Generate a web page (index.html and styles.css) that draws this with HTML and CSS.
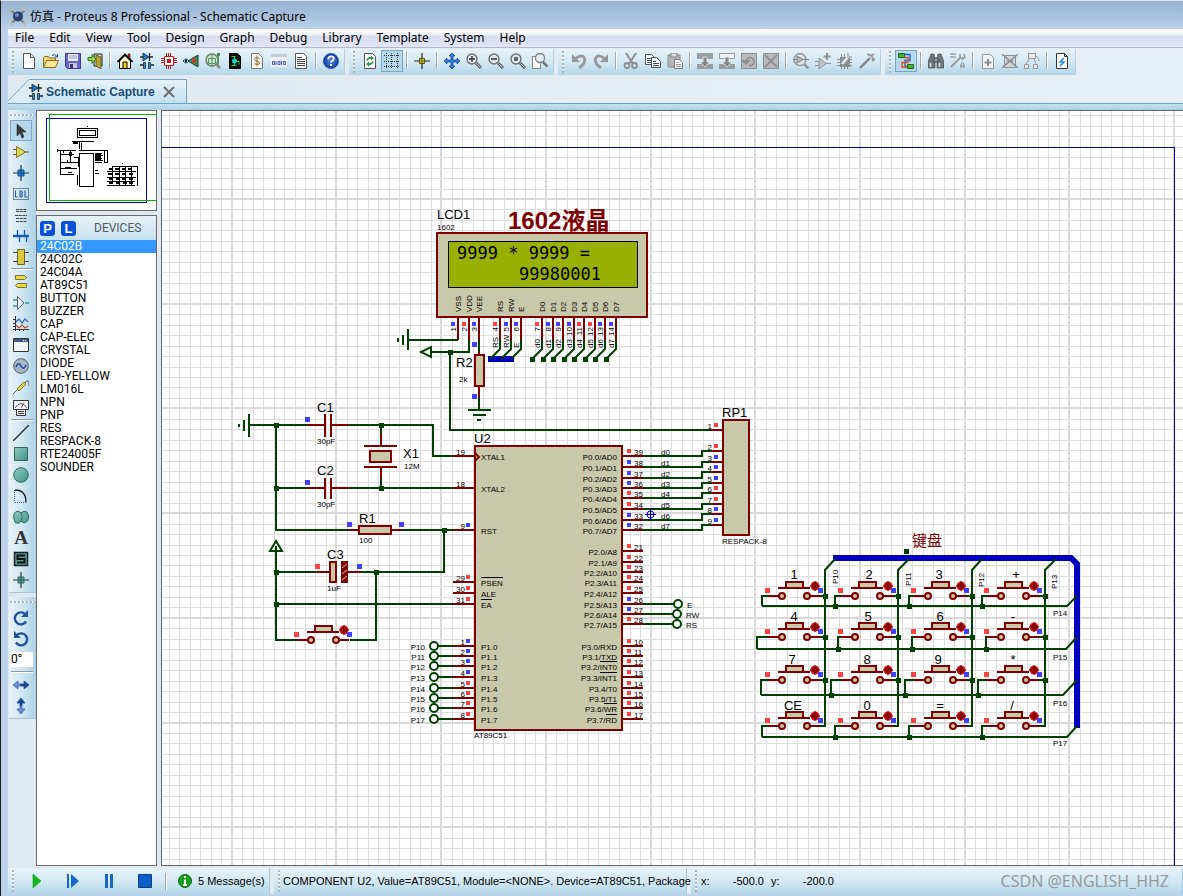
FILE: index.html
```html
<!DOCTYPE html>
<html lang="en">
<head>
<meta charset="utf-8">
<title>仿真 - Proteus 8 Professional - Schematic Capture</title>
<link rel="stylesheet" href="styles.css">
</head>
<body>
<svg class="sprite" aria-hidden="true">
  <defs>
    <linearGradient id="teal" x1="0" y1="0" x2="1" y2="1"><stop offset="0" stop-color="#8fd0c6"/><stop offset="1" stop-color="#3f8f86"/></linearGradient>
    <radialGradient id="orb"><stop offset="0" stop-color="#5a8ae8"/><stop offset="1" stop-color="#123a9c"/></radialGradient>
  </defs>
  <symbol id="i-app" viewBox="0 0 16 16"><path d="M1 1l4 4M15 1l-4 4M1 15l4-4M15 15l-4-4" stroke="#6d7d92" stroke-width="2"/><path d="M0 1h3M13 1h3M0 14h3M13 14h3" stroke="#c9b48a" stroke-width="2"/><circle cx="8" cy="7.500" r="5" fill="#2d3f63"/><circle cx="7" cy="6" r="2" fill="#6f8fc8"/></symbol>
  <symbol id="i-new" viewBox="0 0 16 16"><path d="M2.500 .5h7l4 4v11h-11z" fill="#fff" stroke="#555"/><path d="M9.500 .5v4h4" fill="#ddd" stroke="#555"/></symbol>
  <symbol id="i-open" viewBox="0 0 16 16"><path d="M.5 14.500v-10l1-1h4l1 1.500h6v3" fill="#f6d96c" stroke="#8b6c1e"/><path d="M.5 14.500l3-7h12l-3 7z" fill="#ffe999" stroke="#8b6c1e"/><path d="M9 2.500q3-2.500 5 1M14.500 1v3h-3" fill="none" stroke="#33557a"/></symbol>
  <symbol id="i-save" viewBox="0 0 16 16"><path d="M.5 .5h15v15h-13l-2-2z" fill="#6a63c4" stroke="#40398e"/><path d="M3 1h10v7H3z" fill="#e8eaf4"/><path d="M4 3h8M4 5h8" stroke="#9aa0bb"/><path d="M4 10h8v5H4z" fill="#c9c9d6"/><path d="M5 11h3v4H5z" fill="#3a347c"/></symbol>
  <symbol id="i-exit" viewBox="0 0 16 16"><path d="M7 1h8v12H7z" fill="#ddd" stroke="#222"/><path d="M9 2l5 2v12l-5-3z" fill="#b5a13a" stroke="#574a12" stroke-width=".8"/><path d="M1 4.500h4v-3l4 4.500-4 4.500v-3H1z" fill="#9cd848" stroke="#3b7418"/></symbol>
  <symbol id="i-home" viewBox="0 0 16 16"><path d="M11 1h2v5h-2z" fill="#e02020" stroke="#000" stroke-width=".6"/><path d="M2.500 8v7.500h11V8L8 2.500z" fill="#fffbd0" stroke="#000"/><path d="M.5 9L8 1.500 15.500 9" fill="none" stroke="#000" stroke-width="1.600"/><path d="M6 15V9h4v6" fill="#f0d020" stroke="#000"/></symbol>
  <symbol id="i-sch" viewBox="0 0 16 16"><path d="M1 4h3M10 4h4" stroke="#222" stroke-width="1.400"/><path d="M4 0v8l6-4z" fill="#1c78c8" stroke="#222" stroke-width=".8"/><path d="M10.500 0v8" stroke="#222" stroke-width="1.400"/><path d="M1 12h3M12 12h3" stroke="#222" stroke-width="1.400"/><path d="M4.500 9.500h2v6h-2zM9.500 9.500h2v6h-2z" fill="#2a9be0" stroke="#222" stroke-width=".8"/></symbol>
  <symbol id="i-pcb" viewBox="0 0 16 16"><path d="M5.500 0v16M7.500 0v16M9.500 0v16M0 5.500h16M0 7.500h16M0 9.500h16" stroke="#d01818"/><path d="M3.500 3.500h9v9h-9z" fill="#fff" stroke="#d01818"/><path d="M6 6h4v4H6z" fill="#d01818"/></symbol>
  <symbol id="i-3d" viewBox="0 0 16 16"><path d="M5 8l10-6v12z" fill="#2d9c48" stroke="#234"/><path d="M9 4l5 4-4 3z" fill="#e0302a"/><path d="M0 8q3-4 6 0-3 4-6 0" fill="#d8eaf8" stroke="#246"/><circle cx="3" cy="8" r="1.400" fill="#124"/></symbol>
  <symbol id="i-gerber" viewBox="0 0 16 16"><circle cx="7" cy="7" r="6" fill="#d4e0d4" stroke="#68806c" stroke-width="1.500"/><path d="M3.500 5.500h7v5h-7zM7 1v13M13.500 2v10" fill="none" stroke="#4c9a56"/><path d="M11 11l4 4" stroke="#888" stroke-width="2.500"/><path d="M12 0h3v3h-3z" fill="#3c8e49"/></symbol>
  <symbol id="i-explore" viewBox="0 0 16 16"><path d="M2.500 .5h8l3 3v12h-11z" fill="#0a0a0a" stroke="#000"/><path d="M4.500 3.500h4M4.500 12.500h5M7.500 4v8M10 8.500h2v3" stroke="#19e24a" fill="none"/><circle cx="7.500" cy="8" r="2.500" fill="#19d4c8"/></symbol>
  <symbol id="i-bom" viewBox="0 0 16 16"><path d="M2.500 .5h7l4 4v11h-11z" fill="#f6f6ee" stroke="#777"/><path d="M10.500 5.500q-5-2-5 .8c0 2.400 5 1.200 5 3.700q-.5 2.500-5 .8M8 3v10" fill="none" stroke="#8c7430"/></symbol>
  <symbol id="i-src" viewBox="0 0 16 16"><path d="M0 1h16v3H0z" fill="#c4cddb"/><path d="M0 4h16v10H0z" fill="#eef2f8"/><path d="M1.500 8.500h2v3h-2zM5 8v4M7 8.500h2v3H7zM10.500 8v4M12.500 8.500h2v3h-2z" fill="none" stroke="#5055c8"/></symbol>
  <symbol id="i-notes" viewBox="0 0 16 16"><path d="M2.500 .5h8l3 3v12h-11z" fill="#fff" stroke="#555"/><path d="M4 4.500h5M4 6.500h8M4 8.500h8M4 10.500h8M4 12.500h8" stroke="#444"/></symbol>
  <symbol id="i-help" viewBox="0 0 16 16"><circle cx="8" cy="8" r="7.600" fill="url(#orb)" stroke="#12348c" stroke-width=".6"/><path d="M5.300 6.200q0-2.900 2.800-2.900 2.700 0 2.700 2.300 0 1.500-1.600 2.300-1.100.6-1.100 1.700" fill="none" stroke="#fff" stroke-width="1.800"/><path d="M7 11h2v2H7z" fill="#fff"/></symbol>
  <symbol id="i-refresh" viewBox="0 0 16 16"><path d="M2.500 .5h8l3 3v12h-11z" fill="#fff" stroke="#555"/><path d="M5 7.500q1-3 4.500-2.500M11 8.500q-1 3-4.500 2.500" fill="none" stroke="#219a38" stroke-width="1.600"/><path d="M9 2.500L12 5.200 9 7.500zM7 8.500L4 11l3 2.500z" fill="#219a38"/></symbol>
  <symbol id="i-grid" viewBox="0 0 16 16"><path d="M2.500 0v16M7.500 0v16M13.500 0v16M0 2.500h16M0 8.500h16M0 13.500h16" stroke="#333" stroke-dasharray="1 1"/></symbol>
  <symbol id="i-origin" viewBox="0 0 16 16"><path d="M8 0v16M0 8h16" stroke="#222" stroke-width="1.200"/><path d="M5.500 5.500h5v5h-5z" fill="#d8cf38" stroke="#55520f"/><path d="M8 5v6M5 8h6" stroke="#55520f" stroke-width=".8"/></symbol>
  <symbol id="i-pan" viewBox="0 0 16 16"><path d="M8 0l3 3H9v4h4V5l3 3-3 3V9H9v4h2l-3 3-3-3h2V9H3v2L0 8l3-3v2h4V3H5z" fill="#2a7de0" stroke="#123f8c" stroke-width=".7"/></symbol>
  <symbol id="i-lens" viewBox="0 0 16 16"><circle cx="6" cy="6" r="5" fill="#dfe9f0" stroke="#6a6f76" stroke-width="1.400"/><path d="M10 10l5 5" stroke="#5a5f66" stroke-width="3"/><path d="M10.500 10.500l4 4" stroke="#c9c9c9"/></symbol>
  <symbol id="i-zin" viewBox="0 0 16 16"><use href="#i-lens"/><path d="M3 6h6M6 3v6" stroke="#333" stroke-width="1.500"/></symbol>
  <symbol id="i-zout" viewBox="0 0 16 16"><use href="#i-lens"/><path d="M3 6h6" stroke="#333" stroke-width="1.500"/></symbol>
  <symbol id="i-zall" viewBox="0 0 16 16"><use href="#i-lens"/><path d="M4 4h4v4H4z" fill="#667"/></symbol>
  <symbol id="i-zarea" viewBox="0 0 16 16"><path d="M.5 3.500h8v12h-8z" fill="#fff" stroke="#222" stroke-dasharray="1 1"/><circle cx="8" cy="5" r="4.500" fill="#e6eef4" stroke="#7a7f86" stroke-width="1.300"/><path d="M11 9l4.500 4.500" stroke="#777" stroke-width="2.500"/></symbol>
  <symbol id="i-undo" viewBox="0 0 16 16"><path d="M4 6q7-6 9.500-.5Q15 10 8 15" fill="none" stroke="#96999c" stroke-width="2.800"/><path d="M1 1v8h8z" fill="#96999c"/></symbol>
  <symbol id="i-redo" viewBox="0 0 16 16"><path d="M12 6Q5 0 2.500 5.500 1 10 8 15" fill="none" stroke="#96999c" stroke-width="2.800"/><path d="M15 1v8H7z" fill="#96999c"/></symbol>
  <symbol id="i-cut" viewBox="0 0 16 16"><path d="M3 0l7 11M13 0L6 11" stroke="#8c8f92" stroke-width="2"/><circle cx="4" cy="12.500" r="2.500" fill="none" stroke="#8c8f92" stroke-width="1.800"/><circle cx="11.500" cy="12.500" r="2.500" fill="none" stroke="#8c8f92" stroke-width="1.800"/></symbol>
  <symbol id="i-copy" viewBox="0 0 16 16"><path d="M.5 1.500h6l3 3v7h-9z" fill="#fff" stroke="#445064"/><path d="M6.500 4.500h5l4 4v6h-9z" fill="#fff" stroke="#445064"/><path d="M2 5.500h4M2 7.500h4M2 9.500h4M8 8.500h3M8 10.500h6M8 12.500h6" stroke="#445064"/></symbol>
  <symbol id="i-paste" viewBox="0 0 16 16"><path d="M1 2h12v12H1z" fill="#b4b6b8" stroke="#85888b"/><path d="M4 0h6v4H4z" fill="#d6d8da" stroke="#85888b"/><path d="M7.500 6.500h5l3 3v6h-8z" fill="#fff" stroke="#77797c"/><path d="M9 9.500h3M9 11.500h5M9 13.500h5" stroke="#999"/></symbol>
  <symbol id="i-blkcopy" viewBox="0 0 16 16"><path d="M0 0h16v6H0zM0 11h16v5H0z" fill="#9c9fa1"/><path d="M6 4h4v5h3l-5 5-5-5h3z" fill="#85888a" stroke="#e6edf2" stroke-width=".8"/></symbol>
  <symbol id="i-blkmove" viewBox="0 0 16 16"><path d="M.5 .5h15v5H.5z" fill="#eef2f5" stroke="#96999b"/><path d="M0 11h16v5H0z" fill="#9c9fa1"/><path d="M6 4h4v5h3l-5 5-5-5h3z" fill="#85888a" stroke="#e6edf2" stroke-width=".8"/></symbol>
  <symbol id="i-blkrot" viewBox="0 0 16 16"><path d="M.5 .5h15v15H.5z" fill="#b7b9bb" stroke="#8c8f92"/><path d="M5 9a4 4 0 1 1 3 3.500M2 8h6l-3 3z" fill="none" stroke="#84878a" stroke-width="1.300"/></symbol>
  <symbol id="i-blkdel" viewBox="0 0 16 16"><path d="M.5 .5h15v15H.5z" fill="#b7b9bb" stroke="#8c8f92"/><path d="M2 2l12 12M14 2L2 14" stroke="#84878a" stroke-width="1.500"/></symbol>
  <symbol id="i-pick" viewBox="0 0 16 16"><circle cx="7" cy="6.500" r="6" fill="#dfe2e4" stroke="#96999b" stroke-width="1.500"/><path d="M4 3v7l6-3.500zM0 6.500h4M10 6.500h6" fill="#b7b9bb" stroke="#7f8285"/><path d="M11 11l4.500 4.500" stroke="#96999b" stroke-width="2.500"/></symbol>
  <symbol id="i-make" viewBox="0 0 16 16"><path d="M4 5v11l7-5.500zM0 8.500h4M0 12.500h4M11 10.500h5" fill="#c4c6c8" stroke="#8c8f92"/><path d="M12 0v7M8.500 3.500h7" stroke="#8c8f92" stroke-width="2"/></symbol>
  <symbol id="i-pack" viewBox="0 0 16 16"><path d="M3 4h10v10H3z" fill="#8c8f92"/><path d="M4.500 1v15M7.500 1v15M10.500 1v15M0 6.500h15M0 9.500h15M0 12.500h15" stroke="#8c8f92"/><path d="M5 11l7-8" stroke="#e6eaec" stroke-width="2.500"/><path d="M11 0v4h4" fill="none" stroke="#b7b9bb" stroke-width="2"/></symbol>
  <symbol id="i-hammer" viewBox="0 0 16 16"><path d="M1 15L11 5" stroke="#7f8285" stroke-width="2.400"/><path d="M8 1.500q4-.5 6.500 5M12 3l3-2M13 8l3-2" fill="none" stroke="#96999b" stroke-width="2"/></symbol>
  <symbol id="i-wire" viewBox="0 0 16 16"><path d="M6 1.500h6v6H7v6h3" fill="none" stroke="#1e62d0" stroke-width="1.400"/><path d="M5 4.500h5v5H4v4.500h6" fill="none" stroke="#e05020" stroke-width="1.400"/><path d="M.5 .5h6v4h-6zM9.500 11.500h6v4h-6z" fill="#42b82c" stroke="#1c6a12"/></symbol>
  <symbol id="i-find" viewBox="0 0 16 16"><path d="M3 1h3l1 6v8H0V9zM10 1h3l3 8v6H9V7z" fill="#70757a" stroke="#3c4146" stroke-width=".6"/><path d="M6 5h4v4H6z" fill="#9fa4a8" stroke="#3c4146"/><path d="M2.500 10v4M11.500 10v4" stroke="#dfe3e6" stroke-width="1.500"/></symbol>
  <symbol id="i-prop" viewBox="0 0 16 16"><path d="M0 1h6M0 4h6" stroke="#7f8285" stroke-width="1.200"/><path d="M1 14L11 4" stroke="#96999b" stroke-width="2"/><path d="M10 1v4h4M14 1l1 3-3 3" fill="none" stroke="#96999b" stroke-width="1.500"/><path d="M11 15v-4l1.500-1.500L14 11v4M11 13h3" fill="none" stroke="#7f8285"/></symbol>
  <symbol id="i-addsheet" viewBox="0 0 16 16"><path d="M2.500 1.500h8l3 3v11h-11z" fill="#f3f4f5" stroke="#96999b"/><path d="M8 6v7M4.500 9.500h7" stroke="#8c8f92" stroke-width="2"/></symbol>
  <symbol id="i-delsheet" viewBox="0 0 16 16"><path d="M2.500 2.500h11v12h-11z" fill="#d3d5d7" stroke="#8c8f92"/><path d="M0 1l16 14M16 1L0 15M5 8h6" stroke="#8c8f92" stroke-width="1.500"/></symbol>
  <symbol id="i-hier" viewBox="0 0 16 16"><path d="M4.500 .5h7v5h-7zM.5 11.500h4v4h-4zM9.500 11.500h4v4h-4z" fill="#e6e8e9" stroke="#96999b"/><path d="M5 6l-3 5M10 6l2 5M12 3q4 2 3 5" fill="none" stroke="#96999b"/></symbol>
  <symbol id="i-erc" viewBox="0 0 16 16"><path d="M2.500 .5h8l3 3v12h-11z" fill="#fff" stroke="#333"/><path d="M10.500 .5v3h3" fill="none" stroke="#333"/><path d="M10 5l-4 4h4l-4 4" fill="none" stroke="#1d8ae0" stroke-width="1.500"/></symbol>

  <symbol id="p-arrow" viewBox="0 0 16 16"><path d="M4 1v12l3-3 2 5 2-1-2-5h4z" fill="#3a3a3a" stroke="#222" stroke-width=".5"/></symbol>
  <symbol id="p-gate" viewBox="0 0 16 16"><path d="M0 5.500h3M0 10.500h3M12 8h4" stroke="#5c5a28"/><path d="M3.500 2.500v11L12.500 8z" fill="#e4d652" stroke="#7a7224"/></symbol>
  <symbol id="p-junc" viewBox="0 0 16 16"><path d="M8 0v16M0 8h16" stroke="#234" stroke-width="1.200"/><path d="M5 5h6v6H5z" fill="#2a7fd8" stroke="#124a86"/><path d="M8 5v6M5 8h6" stroke="#124a86" stroke-width=".8"/></symbol>
  <symbol id="p-lbl" viewBox="0 0 16 16"><path d="M.5 2.500h15v11H.5z" fill="none" stroke="#222" stroke-dasharray="1 1"/><path d="M2.500 4.500v6.500H5M7 4.500v6.500h1.500l1-1-1-2 1-1.500-1-1.500H7M12 4.500v6.500h2.500" fill="none" stroke="#2a62b0" stroke-width="1.200"/></symbol>
  <symbol id="p-script" viewBox="0 0 16 16"><path d="M3 2.500h11M3 4.500h11M2 8.500h12M3 11.500h11M3 14.500h11" stroke="#444" stroke-dasharray="3 .7"/></symbol>
  <symbol id="p-bus" viewBox="0 0 16 16"><path d="M0 8h16" stroke="#145aa8" stroke-width="2.400"/><path d="M4.500 2v6M11.500 2v6M6.500 8v6M13.500 8v6" stroke="#145aa8" stroke-width="1.300"/></symbol>
  <symbol id="p-sub" viewBox="0 0 16 16"><path d="M0 3.500h16M0 12.500h16" stroke="#444"/><path d="M4.500 .5h7v15h-7z" fill="#d9c93e" stroke="#6c6420"/></symbol>
  <symbol id="p-term" viewBox="0 0 16 16"><path d="M2.500 1.500h9l2 2-2 2h-9zM13.500 9.500h-9l-2 2 2 2h9z" fill="#e8da4c" stroke="#7a7224"/></symbol>
  <symbol id="p-pin" viewBox="0 0 16 16"><path d="M4.500 1.500v13L11 8z" fill="#e7f1f6" stroke="#667"/><path d="M0 5h4M0 11h4M12 8h4" stroke="#2c9c94" stroke-width="1.300"/></symbol>
  <symbol id="p-graph" viewBox="0 0 16 16"><path d="M2.500 0v15M0 13.500h16M0 3.500h2M0 7.500h2M0 10.500h2M6.500 13v2M10.500 13v2" fill="none" stroke="#333"/><path d="M3 6l3-3 3 4 3-4 3 3" fill="none" stroke="#2a62c0" stroke-width="1.200"/><path d="M3 9l3 3 3-3 3 3 3-2" fill="none" stroke="#d04a20" stroke-width="1.200"/></symbol>
  <symbol id="p-tape" viewBox="0 0 16 16"><path d="M.5 1.500h15v13H.5z" fill="#f2f5f7" stroke="#333"/><path d="M1 2h14v3H1z" fill="#3c5a8a"/><path d="M10 3.500h4" stroke="#fff" stroke-dasharray="1 1"/></symbol>
  <symbol id="p-gen" viewBox="0 0 16 16"><circle cx="8" cy="8" r="7.300" fill="#a9b6c4" stroke="#55606c"/><path d="M3 9q2.500-6 5-1t5-1" fill="none" stroke="#1a4ea8" stroke-width="1.600"/></symbol>
  <symbol id="p-probe" viewBox="0 0 16 16"><path d="M0 15l5-5M12 4q2-4 4-1v4" fill="none" stroke="#556"/><path d="M4 10l7-7 2 2-7 7z" fill="#e8da4c" stroke="#7a7224"/></symbol>
  <symbol id="p-inst" viewBox="0 0 16 16"><path d="M.5 .5h15v9H.5zM3.500 9.500h9v6h-9z" fill="#f4f6f7" stroke="#333"/><path d="M2 8q6-9 12 0" fill="none" stroke="#2a62c0"/><path d="M8 8l3-5" stroke="#d04a20"/><path d="M5 11.500h6M5 13.500h6" stroke="#333"/></symbol>
  <symbol id="p-line" viewBox="0 0 16 16"><path d="M0 16L16 0" stroke="#333" stroke-width="1.500"/></symbol>
  <symbol id="p-rect" viewBox="0 0 16 16"><path d="M1.500 1.500h13v13h-13z" fill="url(#teal)" stroke="#365"/></symbol>
  <symbol id="p-circ" viewBox="0 0 16 16"><circle cx="8" cy="8" r="7.300" fill="url(#teal)" stroke="#365"/></symbol>
  <symbol id="p-arc" viewBox="0 0 16 16"><path d="M1.500 2v12M2 14.500h12" stroke="#1a5ec0" stroke-dasharray="1 1"/><path d="M2 2q11 0 11 12" fill="none" stroke="#222" stroke-width="1.300"/></symbol>
  <symbol id="p-path" viewBox="0 0 16 16"><path d="M8 4q-4-4-7 1-1 4 1 8 4 3 6-1 4 4 7-1 2-4-1-8-3-2-6 1zM8 4q2 4 0 8" fill="url(#teal)" stroke="#365"/></symbol>
  <symbol id="p-sym" viewBox="0 0 16 16"><path d="M1.500 1.500h13v13h-13z" fill="#4f9b90" stroke="#222" stroke-width="1.500"/><path d="M12 4.500H4.500v3.500h7v3.500H4" fill="none" stroke="#111" stroke-width="2"/></symbol>
  <symbol id="p-mark" viewBox="0 0 16 16"><path d="M8 0v16M0 8h16" stroke="#333" stroke-width="1.200"/><path d="M5 5h6v6H5z" fill="#58aaa0" stroke="#365"/><path d="M8 5v6M5 8h6" stroke="#244" stroke-width=".8"/></symbol>
  <symbol id="p-cw" viewBox="0 0 16 16"><path d="M13 11.500A6 6 0 1 1 12 4" fill="none" stroke="#234f9c" stroke-width="2.400"/><path d="M15 0v7H8z" fill="#234f9c"/></symbol>
  <symbol id="p-ccw" viewBox="0 0 16 16"><path d="M3 11.500A6 6 0 1 0 4 4" fill="none" stroke="#234f9c" stroke-width="2.400"/><path d="M1 0v7h7z" fill="#234f9c"/></symbol>
  <symbol id="p-fliph" viewBox="0 0 16 16"><path d="M0 8l5-4v3h3v2H5v3z" fill="#6d92dc" stroke="#3d62ae" stroke-width=".8"/><path d="M16 8l-5-4v3H8v2h3v3z" fill="#1d4596" stroke="#1d4596" stroke-width=".8"/></symbol>
  <symbol id="p-flipv" viewBox="0 0 16 16"><path d="M8 0l4 5H9v3H7V5H4z" fill="#1d4596" stroke="#1d4596" stroke-width=".8"/><path d="M8 16l4-5H9V8H7v3H4z" fill="#6d92dc" stroke="#3d62ae" stroke-width=".8"/></symbol>

  <symbol id="s-play" viewBox="0 0 16 16"><path d="M5 1v14l8-7z" fill="#12b81a" stroke="#0c8412" stroke-width=".5"/></symbol>
  <symbol id="s-step" viewBox="0 0 16 16"><path d="M3 1h2v14H3zM7 1v14l8-7z" fill="#1466c8"/></symbol>
  <symbol id="s-pause" viewBox="0 0 16 16"><path d="M5 1h3v14H5zM10 1h3v14h-3z" fill="#1466c8"/></symbol>
  <symbol id="s-stop" viewBox="0 0 16 16"><path d="M2.500 1.500h13v13h-13z" fill="#0d5ec4" stroke="#0b4590"/></symbol>
  <symbol id="s-info" viewBox="0 0 16 16"><circle cx="8" cy="8" r="6.500" fill="#16a01c" stroke="#0c6e10"/><path d="M8 3v2M8 6.500V12M6 12h4" stroke="#fff" stroke-width="2"/></symbol>
</svg>

<div class="window">
  <header class="titlebar">
    <svg class="icon"><use href="#i-app"/></svg>
    <h1 class="title">仿真 - Proteus 8 Professional - Schematic Capture</h1>
  </header>

  <div class="frame">
    <nav class="menubar" aria-label="Main menu">
      <button class="menu">File</button><button class="menu">Edit</button><button class="menu">View</button><button class="menu">Tool</button><button class="menu">Design</button><button class="menu">Graph</button><button class="menu">Debug</button><button class="menu">Library</button><button class="menu">Template</button><button class="menu">System</button><button class="menu">Help</button>
    </nav>

    <div class="toolbars">
      <div class="toolbar">
        <button class="tool" aria-label="New"><svg class="icon"><use href="#i-new"/></svg></button>
        <button class="tool" aria-label="Open"><svg class="icon"><use href="#i-open"/></svg></button>
        <button class="tool" aria-label="Save"><svg class="icon"><use href="#i-save"/></svg></button>
        <button class="tool" aria-label="Close project"><svg class="icon"><use href="#i-exit"/></svg></button>
        <span class="sep"></span>
        <button class="tool" aria-label="Home"><svg class="icon"><use href="#i-home"/></svg></button>
        <button class="tool" aria-label="Schematic"><svg class="icon"><use href="#i-sch"/></svg></button>
        <button class="tool" aria-label="PCB layout"><svg class="icon"><use href="#i-pcb"/></svg></button>
        <button class="tool" aria-label="3D viewer"><svg class="icon"><use href="#i-3d"/></svg></button>
        <button class="tool" aria-label="Gerber viewer"><svg class="icon"><use href="#i-gerber"/></svg></button>
        <button class="tool" aria-label="Design explorer"><svg class="icon"><use href="#i-explore"/></svg></button>
        <button class="tool" aria-label="Bill of materials"><svg class="icon"><use href="#i-bom"/></svg></button>
        <button class="tool" aria-label="Source code"><svg class="icon"><use href="#i-src"/></svg></button>
        <button class="tool" aria-label="Project notes"><svg class="icon"><use href="#i-notes"/></svg></button>
        <span class="sep"></span>
        <button class="tool" aria-label="Help"><svg class="icon"><use href="#i-help"/></svg></button>
      </div>
      <div class="toolbar">
        <button class="tool" aria-label="Redraw"><svg class="icon"><use href="#i-refresh"/></svg></button>
        <button class="tool pressed" aria-label="Toggle grid"><svg class="icon"><use href="#i-grid"/></svg></button>
        <span class="sep"></span>
        <button class="tool" aria-label="Origin"><svg class="icon"><use href="#i-origin"/></svg></button>
        <span class="sep"></span>
        <button class="tool" aria-label="Pan"><svg class="icon"><use href="#i-pan"/></svg></button>
        <button class="tool" aria-label="Zoom in"><svg class="icon"><use href="#i-zin"/></svg></button>
        <button class="tool" aria-label="Zoom out"><svg class="icon"><use href="#i-zout"/></svg></button>
        <button class="tool" aria-label="Zoom all"><svg class="icon"><use href="#i-zall"/></svg></button>
        <button class="tool" aria-label="Zoom area"><svg class="icon"><use href="#i-zarea"/></svg></button>
      </div>
      <div class="toolbar">
        <button class="tool" aria-label="Undo"><svg class="icon"><use href="#i-undo"/></svg></button>
        <button class="tool" aria-label="Redo"><svg class="icon"><use href="#i-redo"/></svg></button>
        <span class="sep"></span>
        <button class="tool" aria-label="Cut"><svg class="icon"><use href="#i-cut"/></svg></button>
        <button class="tool" aria-label="Copy"><svg class="icon"><use href="#i-copy"/></svg></button>
        <button class="tool" aria-label="Paste"><svg class="icon"><use href="#i-paste"/></svg></button>
        <span class="sep"></span>
        <button class="tool" aria-label="Block copy"><svg class="icon"><use href="#i-blkcopy"/></svg></button>
        <button class="tool" aria-label="Block move"><svg class="icon"><use href="#i-blkmove"/></svg></button>
        <button class="tool" aria-label="Block rotate"><svg class="icon"><use href="#i-blkrot"/></svg></button>
        <button class="tool" aria-label="Block delete"><svg class="icon"><use href="#i-blkdel"/></svg></button>
        <span class="sep"></span>
        <button class="tool" aria-label="Pick parts"><svg class="icon"><use href="#i-pick"/></svg></button>
        <button class="tool" aria-label="Make device"><svg class="icon"><use href="#i-make"/></svg></button>
        <button class="tool" aria-label="Packaging tool"><svg class="icon"><use href="#i-pack"/></svg></button>
        <button class="tool" aria-label="Decompose"><svg class="icon"><use href="#i-hammer"/></svg></button>
      </div>
      <div class="toolbar">
        <button class="tool pressed" aria-label="Wire autorouter"><svg class="icon"><use href="#i-wire"/></svg></button>
        <span class="sep"></span>
        <button class="tool" aria-label="Search"><svg class="icon"><use href="#i-find"/></svg></button>
        <button class="tool" aria-label="Property assignment"><svg class="icon"><use href="#i-prop"/></svg></button>
        <span class="sep"></span>
        <button class="tool" aria-label="New sheet"><svg class="icon"><use href="#i-addsheet"/></svg></button>
        <button class="tool" aria-label="Remove sheet"><svg class="icon"><use href="#i-delsheet"/></svg></button>
        <button class="tool" aria-label="Exit to parent"><svg class="icon"><use href="#i-hier"/></svg></button>
        <span class="sep"></span>
        <button class="tool" aria-label="Electrical rules check"><svg class="icon"><use href="#i-erc"/></svg></button>
      </div>
    </div>

    <div class="tabs">
      <svg class="tab-slope" viewBox="0 0 22 25"><path d="M0 22L21 .5H22V25H0z" fill="#dcedf7"/><path d="M0 22L21 .5h1" fill="none" stroke="#6fa3c4"/></svg>
      <div class="tab">
        <svg class="icon"><use href="#i-sch"/></svg>
        <span class="tab-name">Schematic Capture</span>
        <button class="tab-close" aria-label="Close tab"><svg class="icon-close" viewBox="0 0 12 12"><path d="M1 1l10 10M11 1L1 11" stroke="#6d6f72" stroke-width="2"/></svg></button>
      </div>
    </div>
    <div class="tab-strip"></div>

    <main class="workspace">
      <div class="palettes">
        <div class="palette">
          <button class="pick pressed" aria-label="Selection"><svg class="icon"><use href="#p-arrow"/></svg></button>
          <button class="pick" aria-label="Component"><svg class="icon"><use href="#p-gate"/></svg></button>
          <button class="pick" aria-label="Junction dot"><svg class="icon"><use href="#p-junc"/></svg></button>
          <button class="pick" aria-label="Wire label"><svg class="icon"><use href="#p-lbl"/></svg></button>
          <button class="pick" aria-label="Text script"><svg class="icon"><use href="#p-script"/></svg></button>
          <button class="pick" aria-label="Buses"><svg class="icon"><use href="#p-bus"/></svg></button>
          <button class="pick" aria-label="Subcircuit"><svg class="icon"><use href="#p-sub"/></svg></button>
          <span class="rule"></span>
          <button class="pick" aria-label="Terminals"><svg class="icon"><use href="#p-term"/></svg></button>
          <button class="pick" aria-label="Device pins"><svg class="icon"><use href="#p-pin"/></svg></button>
          <button class="pick" aria-label="Graph"><svg class="icon"><use href="#p-graph"/></svg></button>
          <button class="pick" aria-label="Active popup"><svg class="icon"><use href="#p-tape"/></svg></button>
          <button class="pick" aria-label="Generator"><svg class="icon"><use href="#p-gen"/></svg></button>
          <button class="pick" aria-label="Probe"><svg class="icon"><use href="#p-probe"/></svg></button>
          <button class="pick" aria-label="Instruments"><svg class="icon"><use href="#p-inst"/></svg></button>
          <span class="rule"></span>
          <button class="pick" aria-label="2D line"><svg class="icon"><use href="#p-line"/></svg></button>
          <button class="pick" aria-label="2D box"><svg class="icon"><use href="#p-rect"/></svg></button>
          <button class="pick" aria-label="2D circle"><svg class="icon"><use href="#p-circ"/></svg></button>
          <button class="pick" aria-label="2D arc"><svg class="icon"><use href="#p-arc"/></svg></button>
          <button class="pick" aria-label="2D path"><svg class="icon"><use href="#p-path"/></svg></button>
          <button class="pick pick-text" aria-label="2D text">A</button>
          <button class="pick" aria-label="2D symbol"><svg class="icon"><use href="#p-sym"/></svg></button>
          <button class="pick" aria-label="2D marker"><svg class="icon"><use href="#p-mark"/></svg></button>
        </div>
        <div class="palette">
          <button class="pick" aria-label="Rotate clockwise"><svg class="icon"><use href="#p-cw"/></svg></button>
          <button class="pick" aria-label="Rotate anti-clockwise"><svg class="icon"><use href="#p-ccw"/></svg></button>
          <input class="angle" type="text" value="0°" aria-label="Rotation angle">
          <span class="rule"></span>
          <button class="pick" aria-label="Mirror horizontally"><svg class="icon"><use href="#p-fliph"/></svg></button>
          <button class="pick" aria-label="Mirror vertically"><svg class="icon"><use href="#p-flipv"/></svg></button>
        </div>
      </div>

      <aside class="side">
        <div class="overview">
          <svg class="overview-map" viewBox="37 111 119 99" aria-label="Sheet overview">
            <g fill="none" shape-rendering="crispEdges">
              <path d="M46.500 118.500h100v84h-100z" stroke="#0000b4"/>
              <path d="M156 114.500H49.500v86H156" stroke="#00b400"/>
              <path d="M77 128h20v9H77zM79 130h16v5H79zM79 153h14v33H79zM104 150h3v12h-3z" stroke="#000"/>
              <path d="M87 126v1M72 141h22M75 141l3 3M79 141v8M81 143v7M79 150h26M58 150h18M60 154h14M60 162h18M60 168h17M60 174h14M60 151v23M70 150v13M74 157h4v10M63 150v3M67 160v3M65 167h6M68 172h4M77 175v10M95 153h7M95 155h8M95 158h7M95 160h8M95 162h7M95 170h3M95 173h4" stroke="#000"/>
              <path d="M95 154h6v6h-6zM69 152h3v4h-3zM73 141h5v3h-5z" fill="#000"/>
              <path d="M112 166h25v19M137 166v20M112 166v18M119 166v19M125 166v19M131 166v20M107 171h29M107 177h29M107 181h28M107 185h28" stroke="#000"/>
              <path d="M109 169h4M115 169h4M122 169h4M128 169h4M108 174h4M115 174h5M122 174h4M129 174h4M109 179h4M116 179h4M122 179h4M129 179h4M109 183h4M116 183h4M123 183h4M129 183h4" stroke="#000" stroke-width="2"/>
              <path d="M122 163h1M57 149v3M71 152v3" stroke="#000"/>
            </g>
          </svg>
        </div>
        <section class="devices">
          <div class="devices-head">
            <button class="pl">P</button><button class="pl">L</button>
            <h2 class="devices-title">DEVICES</h2>
          </div>
          <ul class="device-list" role="listbox" aria-label="Devices">
            <li class="device selected" role="option" aria-selected="true">24C02B</li><li class="device" role="option">24C02C</li><li class="device" role="option">24C04A</li><li class="device" role="option">AT89C51</li><li class="device" role="option">BUTTON</li><li class="device" role="option">BUZZER</li><li class="device" role="option">CAP</li><li class="device" role="option">CAP-ELEC</li><li class="device" role="option">CRYSTAL</li><li class="device" role="option">DIODE</li><li class="device" role="option">LED-YELLOW</li><li class="device" role="option">LM016L</li><li class="device" role="option">NPN</li><li class="device" role="option">PNP</li><li class="device" role="option">RES</li><li class="device" role="option">RESPACK-8</li><li class="device" role="option">RTE24005F</li><li class="device" role="option">SOUNDER</li>
          </ul>
        </section>
      </aside>

      <div class="sheet">
        <svg class="canvas" aria-label="Schematic sheet">
          <defs>
            <g id="key">
              <path class="pin" d="M-14 0H-3M28 0H38M-4-8H28"/>
              <path class="part" d="M4-14H21V-8H4z"/>
              <circle class="part" r="3"/><circle class="part" cx="25" r="3"/>
              <circle cx="33" cy="-10" r="4.500" fill="#e81010"/><path d="M33-15v10M28-10h10" fill="none" stroke="#600000"/><circle cx="33" cy="-10" r="2.500" fill="none" stroke="#500"/>
              <path class="hi" d="M-17-8h5v5h-5z"/><path class="lo" d="M36-8h5v5h-5z"/>
            </g>
          </defs>
          <g transform="translate(-162 -111)">
            <g id="grid"></g>
            <path d="M161 147.500H1174.500V870" class="border"/>

            <g class="crisp">
              <path class="part" d="M437 233H647V317H437z"/>
              <path d="M448.500 241.500H637.500V287.500H448.500z" fill="#98b000" stroke="#000"/>
              <path class="bus" d="M488 359H514"/>
              <path class="wire" d="M458 340H408M408 329V350M469 340V352H431M450 352V430H711M479 340V352M479 397V410M468 410H491"/>
              <path class="wire" d="M403 335V345M398 338V342M473 415H486M477 420H481"/>
              <path class="pin" d="M479 352V355M479 386V397"/>
              <path class="part" d="M475 355H484V386H475z"/>
              <path class="lo" d="M472 342h5v5h-5zM472 394h5v5h-5z"/>

              <path class="wire" d="M249 425H307M249 414V437M244 420V431M239 424V427M276 425V530H348M276 488H307M349 425H433V456H453M381 425V434M381 479V488M349 488H453M402 530H453M444 530V572H361M276 546V640H297M276 572H317M276 604H453M350 640H376V572"/>
              <path class="pin" d="M307 425H325M331 425H349M325 414V437M331 414V437M307 488H325M331 488H349M325 478V499M331 478V499M381 434V446M364 446H397M364 467H397M381 467V479M348 530H359M391 530H402M317 572H329M347 572H361"/>
              <path class="part" d="M370 451H391V462H370zM359 526H391V534H359zM330 562H336V582H330z"/>
              <path d="M342 562H347V582H342z" fill="#800000" stroke="#800000" stroke-width="2"/>
              <path class="lo" d="M305 417h5v5h-5zM305 480h5v5h-5zM347 522h5v5h-5zM399 522h5v5h-5zM357 564h5v5h-5z"/>
              <path class="hi" d="M315 564h5v5h-5z"/>
              <path class="part" d="M475 446H622V730H475zM723 420H749V535H723z"/>
              <path class="thin" d="M481 577.500H503M481 599.500H492M600 661.500H617M600 672.500H617M604 703.500H617M606 714.500H617"/>
            </g>
            <path d="M342 568l5-4M342 574l5-4M342 580l5-4" stroke="#c8c8aa"/>
            <path d="M475 453l4 4-4 4" fill="none" stroke="#800000" stroke-width="2"/>
            <path class="open" d="M431 347V357L421 352zM270 551H282L276 541z"/>
            <path class="crisp dot" d="M448 350h5v5h-5zM274 423h5v5h-5zM379 423h5v5h-5zM274 486h5v5h-5zM379 486h5v5h-5zM442 528h5v5h-5zM274 570h5v5h-5zM374 570h5v5h-5zM274 602h5v5h-5zM904 549h5v5h-5z"/>
            <use href="#key" x="311" y="640"/>

            <text x="437" y="219" class="name">LCD1</text><text x="437" y="230">1602</text>
            <text x="508" y="229" class="banner">1602液晶</text>
            <text x="457" y="259" class="lcd">9999 * 9999 =</text>
            <text x="519" y="280" class="lcd">99980001</text>
            <text x="456" y="367" class="name">R2</text><text x="459" y="382">2k</text>
            <text x="317" y="412" class="name">C1</text><text x="317" y="444">30pF</text>
            <text x="317" y="475" class="name">C2</text><text x="317" y="507">30pF</text>
            <text x="403" y="458" class="name">X1</text><text x="404" y="469">12M</text>
            <text x="359" y="523" class="name">R1</text><text x="359" y="543">100</text>
            <text x="327" y="559" class="name">C3</text><text x="327" y="591">1uF</text>
            <text x="474" y="443" class="name">U2</text><text x="474" y="738">AT89C51</text>
            <text x="722" y="417" class="name">RP1</text><text x="722" y="544">RESPACK-8</text>
            <text x="912" y="546" class="note">键盘</text>

            <g id="pins"></g>
            <path class="bus" d="M833 558H1071L1077 564V728"/>
            <g id="keypad"></g>

            <g fill="none" stroke="#0000c0"><circle cx="650.500" cy="514.500" r="3.500"/><path d="M650.500 509v11M645 514.500h11"/></g>
          </g>
        </svg>
      </div>
    </main>

    <footer class="statusbar">
      <div class="status-group run">
        <button class="sim" aria-label="Run"><svg class="icon"><use href="#s-play"/></svg></button>
        <button class="sim" aria-label="Step"><svg class="icon"><use href="#s-step"/></svg></button>
        <button class="sim" aria-label="Pause"><svg class="icon"><use href="#s-pause"/></svg></button>
        <button class="sim" aria-label="Stop"><svg class="icon"><use href="#s-stop"/></svg></button>
        <span class="sep"></span>
        <svg class="icon info"><use href="#s-info"/></svg>
        <span class="messages">5 Message(s)</span>
      </div>
      <div class="status-group hint">COMPONENT U2, Value=AT89C51, Module=&lt;NONE&gt;. Device=AT89C51, Package</div>
      <div class="status-group coords"><span class="axis">x:</span><span class="coord">-500.0</span><span class="axis">y:</span><span class="coord">-200.0</span><span class="credit">CSDN @ENGLISH_HHZ</span></div>
    </footer>
  </div>
</div>
<script src="schematic.js"></script>
</body>
</html>
```

FILE: styles.css
```css
* { box-sizing: border-box; }

body {
  margin: 0;
  font: 12px/16px "Liberation Sans", Arial, sans-serif;
  color: #000;
}

button {
  margin: 0;
  padding: 0;
  border: 0;
  background: none;
  font: inherit;
  color: inherit;
}

.sprite { position: absolute; width: 0; height: 0; }
.icon { display: block; width: 16px; height: 16px; flex: none; }

.window {
  display: flex;
  flex-direction: column;
  height: 100vh;
  border-left: 1px solid #1c1c1c;
  border-top: 1px solid #dfe8f1;
  background: #bcd2ea;
}

.titlebar {
  display: flex;
  align-items: center;
  gap: 4px;
  height: 28px;
  flex: none;
  padding: 4px 9px 0;
  background: linear-gradient(#96b2cf, #b9d1ea);
}
.title {
  margin: 0;
  font: 12px/18px "Noto Sans", "Noto Sans CJK SC", sans-serif;
}

.frame {
  flex: 1;
  min-height: 0;
  display: flex;
  flex-direction: column;
  margin: 0 0 2px 7px;
  background: linear-gradient(90deg, #e0e8f0, #e8f0f7);
}

.menubar {
  display: flex;
  gap: 15px;
  height: 19px;
  flex: none;
  padding: 0 7px;
  border-bottom: 1px solid #b5b5cd;
  background: linear-gradient(#fff, #eaeef8 35%, #d8dcf0 40%, #e3e6f7);
}
.menu { font: 12px/18px "Noto Sans", "Noto Sans CJK SC", sans-serif; }

.toolbars { display: flex; gap: 4px; height: 27px; flex: none; padding-top: 1px; }
.toolbar {
  position: relative;
  display: flex;
  align-items: center;
  padding: 0 2px 3px 10px;
  border-right: 1px solid #b3d0e3;
  background: linear-gradient(#e6f2f9, #d3e9f5 50%, #b4d5e7);
}
.toolbar::before, .status-group::before {
  content: "";
  position: absolute;
  left: 4px;
  top: 2px;
  bottom: 2px;
  width: 2px;
  background: repeating-linear-gradient(#aab4bc 0 2px, #fff 2px 3px, transparent 3px 4px);
}
.tool { display: grid; place-items: center; width: 22px; height: 22px; flex: none; }
.pressed { border: 1px solid #7ba7c4; background: #b6d8ea; }
.sep { width: 2px; height: 17px; margin: 0 3px; flex: none; border-left: 1px solid #a2a7ab; background: #fff; }

.tabs { display: flex; height: 28px; flex: none; padding-top: 4px; }
.tab-slope { width: 22px; height: 25px; flex: none; }
.tab {
  display: flex;
  align-items: center;
  width: 157px;
  height: 25px;
  border-top: 1px solid #6fa3c4;
  border-right: 1px solid #6fa3c4;
  background: linear-gradient(#e6f2f9, #c3e0ef);
}
.tab .icon { margin-left: -2px; }
.tab-name { margin: 0 8px 0 2px; font-weight: bold; white-space: nowrap; color: #1c4c74; }
.icon-close { display: block; width: 12px; height: 12px; }
.tab-strip {
  height: 7px;
  flex: none;
  border-top: 1px solid #6fa3c4;
  background: linear-gradient(#c3e0ef, #aed0e4);
}

.workspace { flex: 1; min-height: 0; display: flex; }

.palettes { width: 28px; flex: none; display: flex; flex-direction: column; gap: 4px; padding-left: 1px; }
.palette {
  position: relative;
  display: flex;
  flex-direction: column;
  align-items: flex-start;
  padding: 10px 2px 2px 1px;
  border-bottom: 1px solid #a5c4d8;
  background: linear-gradient(90deg, #e6f2f9, #cfe6f3 50%, #acd1e5);
}
.palette::before {
  content: "";
  position: absolute;
  left: 1px;
  right: 1px;
  top: 4px;
  height: 2px;
  background: repeating-linear-gradient(90deg, #aab4bc 0 2px, #fff 2px 3px, transparent 3px 4px);
}
.pick { display: grid; place-items: center; width: 22px; height: 21px; flex: none; }
.pick-text { font: bold 19px/21px "Liberation Serif", serif; color: #333; }
.rule { width: 22px; height: 2px; margin: 1px; border-top: 1px solid #8f979d; background: #fff; }
.angle {
  width: 23px;
  height: 15px;
  margin: 3px 0;
  padding: 0 1px;
  border: 0;
  background: #fff;
  font: 12px/15px Roboto, sans-serif;
}

.side { width: 121px; flex: none; display: flex; flex-direction: column; gap: 4px; margin-right: 4px; }
.overview { height: 101px; flex: none; border: 1px solid #6b6b6b; background: #fff; }
.overview-map { display: block; width: 119px; height: 99px; }
.devices { flex: 1; min-height: 0; display: flex; flex-direction: column; border: 1px solid #6b6b6b; background: #fff; }
.devices-head {
  display: flex;
  align-items: center;
  gap: 6px;
  height: 24px;
  flex: none;
  padding-left: 3px;
  background: linear-gradient(#e6f2f9, #c6e1ef);
}
.pl {
  width: 15px;
  height: 15px;
  border-radius: 3px;
  background: #0b50d8;
  color: #fff;
  font: bold 13px/15px "Liberation Sans", sans-serif;
}
.devices-title { margin: 0 0 0 12px; font: 12px/16px Roboto, sans-serif; color: #505860; }
.device-list { margin: 0; padding: 0; list-style: none; }
.device { padding: 0 3px; font: 12px/13px Roboto, sans-serif; }
.selected { background: #3399ff; color: #fff; }

.sheet {
  flex: 1;
  min-width: 0;
  display: flex;
  overflow: hidden;
  border: 1px solid #5f6468;
  border-right: 0;
  background: #fff;
}
.canvas { display: block; width: 100%; height: 100%; font: 8px "Liberation Sans", Arial, sans-serif; }

.crisp, .border, .minor, .major { shape-rendering: crispEdges; }
.minor { fill: #dedede; }
.major { fill: #d9d9d9; }
.border { fill: none; stroke: #0000b4; }
.wire { fill: none; stroke: #004000; stroke-width: 2; }
.pin { fill: none; stroke: #800000; stroke-width: 2; }
.part { fill: #c8c8aa; stroke: #800000; stroke-width: 2; }
.bus { fill: none; stroke: #0000c0; stroke-width: 6; }
.open { fill: none; stroke: #004000; stroke-width: 2; }
.node { fill: #fff; stroke: #004000; stroke-width: 2; }
.dot { fill: #004000; }
.hi { fill: #ff4040; }
.lo { fill: #4040ff; }
.thin { fill: none; stroke: #000; }
.end { text-anchor: end; }
.mid { text-anchor: middle; }
.name { font-size: 13px; }
.banner { font: bold 24px "Liberation Sans", "Noto Sans CJK SC", sans-serif; fill: #800000; }
.note { font: 15px "Noto Sans CJK SC", sans-serif; fill: #800000; }
.lcd { font: 17px "DejaVu Sans Mono", monospace; white-space: pre; }

.statusbar { display: flex; gap: 4px; height: 26px; flex: none; margin-top: 2px; }
.status-group {
  position: relative;
  display: flex;
  align-items: center;
  padding-left: 10px;
  border-right: 1px solid #a8c8dc;
  background: linear-gradient(#e6f2f9, #d3e9f5 50%, #b4d5e7);
  font-size: 11px;
  white-space: nowrap;
}
.run { width: 262px; flex: none; }
.sim { display: grid; place-items: center; width: 36px; height: 22px; flex: none; }
.info { margin: 0 5px 0 7px; }
.hint { width: 413px; flex: none; padding-left: 9px; }
.coords { flex: 1; }
.axis { width: 14px; flex: none; }
.coord { width: 49px; flex: none; text-align: right; margin-right: 7px; }
.credit { margin-left: auto; padding-right: 13px; font: 16px/20px "Noto Sans", sans-serif; color: #96999e; }
```

FILE: schematic.js
```js
const svg = {
  wires: (d) => `<path class="wire" d="${d}"/>`,
  pins: (d) => `<path class="pin" d="${d}"/>`,
  text: (x, y, s, cls = "") => `<text x="${x}" y="${y}" class="${cls}">${s}</text>`,
  up: (x, y, s, cls = "") => `<text transform="translate(${x} ${y}) rotate(-90)" class="${cls}">${s}</text>`,
  level: (x, y, bit) => `<path class="crisp ${bit === "1" ? "hi" : "lo"}" d="M${x - 2} ${y - 2}h4v4h-4z"/>`,
  dot: (x, y) => `<path class="crisp dot" d="M${x - 2} ${y - 2}h5v5h-5z"/>`,
  node: (x, y) => `<circle class="node" cx="${x}" cy="${y}" r="4"/>`,
};

function drawGrid() {
  const pitch = 10.47;
  let out = "";
  for (let k = -60; k <= 97; k++) {
    const x = Math.round(1174 - k * pitch);
    out += k % 10 === 0
      ? `<rect class="major" x="${x - 1}" y="111" width="2" height="3000"/>`
      : `<rect class="minor" x="${x}" y="111" width="1" height="3000"/>`;
  }
  for (let k = -8; k <= 150; k++) {
    const y = Math.round(199 + k * pitch);
    out += k % 10 === 0
      ? `<rect class="major" x="161" y="${y - 1}" width="3000" height="2"/>`
      : `<rect class="minor" x="161" y="${y}" width="3000" height="1"/>`;
  }
  document.getElementById("grid").innerHTML = out;
}

function drawPins() {
  let lines = "", over = "";

  // LCD module pins: x, name, number, level, net label
  const lcd = [
    [458, "VSS", 1, "0"], [469, "VDD", 2, "1"], [479, "VEE", 3, "0"],
    [500, "RS", 4, "1", "RS"], [511, "RW", 5, "0", "RW"], [521, "E", 6, "0", "E"],
    [542, "D0", 7, "1", "d0"], [553, "D1", 8, "0", "d1"], [563, "D2", 9, "0", "d2"], [574, "D3", 10, "0", "d3"],
    [584, "D4", 11, "1", "d4"], [595, "D5", 12, "1", "d5"], [605, "D6", 13, "0", "d6"], [616, "D7", 14, "0", "d7"],
  ];
  for (const [x, name, num, bit, net] of lcd) {
    lines += svg.pins(`M${x} 318V340`);
    over += svg.up(x + 3, 312, name) + svg.up(x - 2, 327, num, "end") + svg.level(x - 5, 324, bit);
    if (!net) continue;
    lines += svg.wires(`M${x} 340V349L${x - 10} 359`);
    over += svg.up(x - 2, 348, net);
    if (net[0] === "d") over += svg.dot(x - 10, 359);
  }

  // U2 left side: y, name, number, level
  const left = [
    [456, "XTAL1", 19], [488, "XTAL2", 18], [530, "RST", 9, "0"],
    [582, "PSEN", 29, "1"], [593, "ALE", 30, "1"], [604, "EA", 31, "1"],
    [646, "P1.0", 1, "0"], [656, "P1.1", 2, "0"], [666, "P1.2", 3, "0"], [677, "P1.3", 4, "0"],
    [688, "P1.4", 5, "1"], [698, "P1.5", 6, "1"], [708, "P1.6", 7, "1"], [719, "P1.7", 8, "1"],
  ];
  left.forEach(([y, name, num, bit], i) => {
    lines += svg.pins(`M453 ${y}H474`);
    over += svg.text(481, y + 4, name) + svg.text(465, y - 1, num, "end");
    if (bit) over += svg.level(468, y - 5, bit);
    if (i > 5) {
      lines += svg.wires(`M438 ${y}H453`);
      over += svg.node(434, y) + svg.text(425, y + 4, "P1" + (i - 6), "end");
    }
  });

  // U2 right side
  const ports = [
    { ys: [456, 467, 478, 488, 498, 509, 520, 530], names: ["P0.0/AD0", "P0.1/AD1", "P0.2/AD2", "P0.3/AD3", "P0.4/AD4", "P0.5/AD5", "P0.6/AD6", "P0.7/AD7"], first: 39, step: -1, bits: "10001100" },
    { ys: [551, 562, 572, 582, 593, 604, 614, 624], names: ["P2.0/A8", "P2.1/A9", "P2.2/A10", "P2.3/A11", "P2.4/A12", "P2.5/A13", "P2.6/A14", "P2.7/A15"], first: 21, step: 1, bits: "11111001" },
    { ys: [646, 656, 666, 677, 688, 698, 708, 719], names: ["P3.0/RXD", "P3.1/TXD", "P3.2/INT0", "P3.3/INT1", "P3.4/T0", "P3.5/T1", "P3.6/WR", "P3.7/RD"], first: 10, step: 1, bits: "11111111" },
  ];
  for (const p of ports) {
    p.ys.forEach((y, i) => {
      lines += svg.pins(`M623 ${y}H643`);
      over += svg.text(617, y + 4, p.names[i], "end") + svg.text(634, y - 1, p.first + p.step * i) + svg.level(629, y - 5, p.bits[i]);
    });
  }

  // Data lines into the resistor pack
  [451, 462, 472, 483, 493, 504, 514, 525].forEach((y, i) => {
    const from = ports[0].ys[i];
    lines += svg.wires(`M643 ${from}H702V${y}H711`) + svg.pins(`M711 ${y}H722`);
    over += svg.text(661, from - 1, "d" + i) + svg.text(712, y - 1, i + 2, "end") + svg.level(716, y - 5, "10001100"[i]);
  });
  lines += svg.pins("M711 430H722");
  over += svg.text(712, 429, 1, "end") + svg.level(716, 425, "1");

  [[604, 678, "E"], [614, 677, "RW"], [624, 677, "RS"]].forEach(([y, x, net]) => {
    lines += svg.wires(`M643 ${y}H${x - 4}`);
    over += svg.node(x, y) + svg.text(x + 9, y + 4, net);
  });

  document.getElementById("pins").innerHTML = lines + over;
}

function drawKeypad() {
  const cols = [
    { x: 825, tap: 835, net: "P10", lx: 838, ly: 584 },
    { x: 898, tap: 909, net: "P11", lx: 911, ly: 586 },
    { x: 972, tap: 982, net: "P12", lx: 984, ly: 587 },
    { x: 1045, tap: 1056, net: "P13", lx: 1057, ly: 589 },
  ];
  const rows = [
    { y: 596, rail: 606, stubs: [762, 835, 909, 982], base: 579, end: 1067, net: "P14", ly: 616, keys: [[794, "1"], [869, "2"], [939, "3"], [1016, "+"]] },
    { y: 637, rail: 649, stubs: [757, 838, 912, 986], base: 621, end: 1066, net: "P15", ly: 660, keys: [[794, "4"], [868, "5"], [940, "6"], [1013, "-"]] },
    { y: 680, rail: 695, stubs: [761, 831, 905, 978], base: 664, end: 1063, net: "P16", ly: 706, keys: [[792, "7"], [867, "8"], [938, "9"], [1013, "*"]] },
    { y: 726, rail: 737, stubs: [762, 835, 909, 982], base: 710, end: 1067, net: "P17", ly: 746, keys: [[793, "CE"], [867, "0"], [940, "="], [1012, "/"]] },
  ];
  const keyX = [782, 855, 928, 1001];
  let lines = "", over = "";
  for (const c of cols) {
    lines += svg.wires(`M${c.tap} 559L${c.x} 570V727`);
    over += svg.up(c.lx, c.ly, c.net);
  }
  rows.forEach((r, ri) => {
    lines += svg.wires(`M${r.stubs[0]} ${r.rail}H${r.end}L1077 ${r.y}`);
    keyX.forEach((kx, i) => {
      lines += svg.wires(`M${kx - 14} ${r.y}H${r.stubs[i]}V${r.rail}M${kx + 38} ${r.y}H${cols[i].x}`);
      if (i) over += svg.dot(r.stubs[i], r.rail);
      if (ri < 3) over += svg.dot(cols[i].x, r.y);
      over += `<use href="#key" x="${kx}" y="${r.y}"/>` + svg.text(r.keys[i][0], r.base, r.keys[i][1], "name mid");
    });
    over += svg.text(1053, r.ly, r.net);
  });
  document.getElementById("keypad").innerHTML = lines + over;
}

drawGrid();
drawPins();
drawKeypad();
```
